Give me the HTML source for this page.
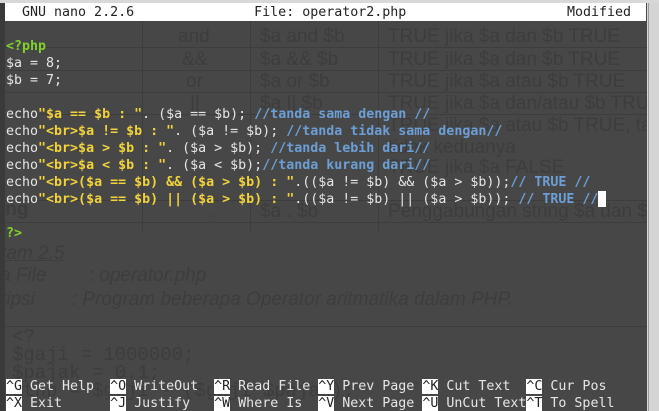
<!DOCTYPE html>
<html><head><meta charset="utf-8"><style>
html,body{margin:0;padding:0;width:659px;height:411px;overflow:hidden;background:#d8d8d8}
#term{position:absolute;left:0;top:0;width:647px;height:411px;background:#474747;overflow:hidden}
#lb{position:absolute;left:0;top:0;width:5px;height:411px;background:#3a3a3a}
#sb{position:absolute;left:648px;top:0;width:11px;height:411px;background:#d4d4d4;border-left:1px solid #9a9a9a}
#topb{position:absolute;left:0;top:0;width:659px;height:3px;background:#d8d8d8}
.bg{position:absolute;color:#3d3d3d;font-family:"Liberation Sans",sans-serif;font-size:19px;white-space:pre}
.hl{position:absolute;height:1px;background:#3d3d3d}
.vl{position:absolute;width:1px;background:#3d3d3d}
.r{position:absolute;left:6px;height:17px;line-height:17px;font-family:"DejaVu Sans Mono","Liberation Mono",monospace;font-size:13.3px;color:#e6e6e6;white-space:pre}
.y{color:#f2d33c;font-weight:bold}
.c{color:#6d9fd6;font-weight:bold}
.g{color:#7fd22c;font-weight:bold}
.k{background:#fff;color:#222}
#title{position:absolute;left:5px;top:3px;width:641px;height:18px;background:#fff}
#cur{display:inline-block;width:8px;height:16px;background:#fff;vertical-align:top}
</style></head><body>
<div id="term">
<div class="vl" style="left:142px;top:21px;height:210px"></div>
<div class="vl" style="left:250px;top:21px;height:210px"></div>
<div class="vl" style="left:378px;top:21px;height:210px"></div>
<div class="hl" style="left:0;top:47px;width:647px"></div>
<div class="hl" style="left:0;top:70px;width:647px"></div>
<div class="hl" style="left:0;top:92px;width:647px"></div>
<div class="hl" style="left:0;top:114px;width:647px"></div>
<div class="hl" style="left:0;top:200px;width:647px"></div>
<div class="hl" style="left:0;top:222px;width:647px"></div>
<div class="hl" style="left:0;top:326px;width:647px"></div>
<div class="bg" style="left:178px;top:26px">and</div>
<div class="bg" style="left:182px;top:49px">&amp;&amp;</div>
<div class="bg" style="left:186px;top:71px">or</div>
<div class="bg" style="left:190px;top:93px">||</div>
<div class="bg" style="left:260px;top:26px">$a and $b</div>
<div class="bg" style="left:260px;top:49px">$a &amp;&amp; $b</div>
<div class="bg" style="left:260px;top:71px">$a or $b</div>
<div class="bg" style="left:260px;top:93px">$a || $b</div>
<div class="bg" style="left:260px;top:201px">$a . $b</div>
<div class="bg" style="left:208px;top:201px">.</div>
<div class="bg" style="left:388px;top:26px">TRUE jika $a dan $b TRUE</div>
<div class="bg" style="left:388px;top:49px">TRUE jika $a dan $b TRUE</div>
<div class="bg" style="left:388px;top:71px">TRUE jika $a atau $b TRUE</div>
<div class="bg" style="left:388px;top:93px">TRUE jika $a dan/atau $b TRUE</div>
<div class="bg" style="left:388px;top:115px">TRUE jika $a atau $b TRUE, tapi</div>
<div class="bg" style="left:388px;top:137px">tidak keduanya</div>
<div class="bg" style="left:388px;top:157px">TRUE jika $a FALSE</div>
<div class="bg" style="left:388px;top:201px">Penggabungan string $a dan $b</div>
<div class="bg" style="left:0;top:199px;font-weight:bold">ing</div>
<div class="bg" style="left:0;top:243px;font-style:italic;text-decoration:underline">ram 2.5</div>
<div class="bg" style="left:0;top:265px;font-style:italic">a File        : operator.php</div>
<div class="bg" style="left:0;top:289px;font-style:italic">ripsi       : Program beberapa Operator aritmatika dalam PHP.</div>
<div class="bg" style="left:12px;top:326px;font-family:'Liberation Mono',monospace">&lt;?</div>
<div class="bg" style="left:12px;top:344px;font-family:'Liberation Mono',monospace">$gaji = 1000000;</div>
<div class="bg" style="left:12px;top:362px;font-family:'Liberation Mono',monospace">$pajak = 0.1;</div>
<div class="bg" style="left:12px;top:380px;font-family:'Liberation Mono',monospace">$thp = $gaji - ($gaji*$pajak);</div>
<div id="lb"></div>
<div id="title"></div>
<div class="r" style="top:4px;color:#222">  GNU nano 2.2.6               File: operator2.php</div>
<div class="r" style="top:4px;left:567px;color:#222">Modified</div>
<div class="r" style="top:38px"><span class="g">&lt;?php</span></div>
<div class="r" style="top:55px">$a = 8;</div>
<div class="r" style="top:72px">$b = 7;</div>
<div class="r" style="top:106px">echo<span class="y">"$a == $b : "</span>. ($a == $b); <span class="c">//tanda sama dengan //</span></div>
<div class="r" style="top:123px">echo<span class="y">"&lt;br&gt;$a != $b : "</span>. ($a != $b); <span class="c">//tanda tidak sama dengan//</span></div>
<div class="r" style="top:140px">echo<span class="y">"&lt;br&gt;$a &gt; $b : "</span>. ($a &gt; $b); <span class="c">//tanda lebih dari//</span></div>
<div class="r" style="top:157px">echo<span class="y">"&lt;br&gt;$a &lt; $b : "</span>. ($a &lt; $b);<span class="c">//tanda kurang dari//</span></div>
<div class="r" style="top:174px">echo<span class="y">"&lt;br&gt;($a == $b) &amp;&amp; ($a &gt; $b) : "</span>.(($a != $b) &amp;&amp; ($a &gt; $b));<span class="c">// TRUE //</span></div>
<div class="r" style="top:191px">echo<span class="y">"&lt;br&gt;($a == $b) || ($a &gt; $b) : "</span>.(($a != $b) || ($a &gt; $b)); <span class="c">// TRUE //</span><span id="cur"></span></div>
<div class="r" style="top:225px"><span class="g">?&gt;</span></div>
<div class="r" style="top:378px"><span class="k">^G</span> Get Help  <span class="k">^O</span> WriteOut  <span class="k">^R</span> Read File <span class="k">^Y</span> Prev Page <span class="k">^K</span> Cut Text  <span class="k">^C</span> Cur Pos</div>
<div class="r" style="top:395px"><span class="k">^X</span> Exit      <span class="k">^J</span> Justify   <span class="k">^W</span> Where Is  <span class="k">^V</span> Next Page <span class="k">^U</span> UnCut Text<span class="k">^T</span> To Spell</div>
</div>
<div id="sb"></div>
<div id="topb"></div>
</body></html>
